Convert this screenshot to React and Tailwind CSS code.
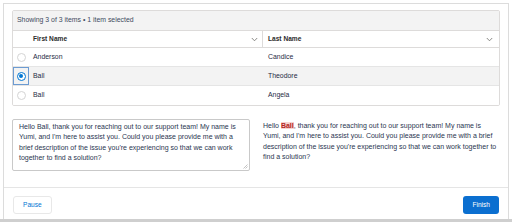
import React from 'react';

const rows = [
    { first: 'Anderson', last: 'Candice', selected: false },
    { first: 'Ball', last: 'Theodore', selected: true },
    { first: 'Ball', last: 'Angela', selected: false },
];

function Chevron() {
    return (
        <svg width="7" height="5" viewBox="0 0 7 5" className="text-[#706e6b]">
            <path d="M0.8 1 L3.5 3.8 L6.2 1" fill="none" stroke="currentColor" strokeWidth="0.8" />
        </svg>
    );
}

function Radio({ checked }) {
    return checked ? (
        <span className="w-[9px] h-[9px] rounded-full border border-[#0176d3] bg-white flex items-center justify-center">
            <span className="w-[4px] h-[4px] rounded-full bg-[#0176d3]" />
        </span>
    ) : (
        <span className="w-[9px] h-[9px] rounded-full border border-[#d4d4d4] bg-white" />
    );
}

export default function App() {
    return (
        <div className="w-[512px] h-[222px] bg-white font-['Liberation_Sans',Arial,sans-serif] text-[#1f2b45] flex flex-col">
            <div className="mx-[3px] mt-[3px] h-[216px] border border-[#dcdcdc] border-b-0 bg-white flex flex-col">
                {/* table */}
                <div className="mx-[8px] mt-[6px] border border-[#dddbda] rounded-[2px] overflow-hidden">
                    <div className="h-[19px] bg-[#f3f3f3] flex items-center px-[4px] text-[6.9px] text-[#3e4a60]">
                        Showing 3 of 3 items • 1 item selected
                    </div>
                    <div className="grid grid-cols-[16px_234px_1fr] h-[18px] bg-white border-t border-b border-[#dddbda] text-[6.6px] font-bold text-[#2b2b2b]">
                        <div />
                        <div className="flex items-center justify-between px-[4px] border-r border-[#dddbda]">
                            <span>First Name</span>
                            <Chevron />
                        </div>
                        <div className="flex items-center justify-between px-[5px] pr-[6px]">
                            <span>Last Name</span>
                            <Chevron />
                        </div>
                    </div>
                    {rows.map((r, i) => (
                        <div
                            key={i}
                            className={
                                'grid grid-cols-[16px_234px_1fr] h-[19px] text-[6.9px] ' +
                                (r.selected ? 'bg-[#f3f3f3] ' : 'bg-white ') +
                                (i < rows.length - 1 ? 'border-b border-[#e5e5e5]' : '')
                            }
                        >
                            <div className={'flex items-center justify-center ' + (r.selected ? 'border border-[#6c9bd2]' : '')}>
                                <Radio checked={r.selected} />
                            </div>
                            <div className="flex items-center px-[4px]">{r.first}</div>
                            <div className="flex items-center px-[5px]">{r.last}</div>
                        </div>
                    ))}
                </div>

                {/* message area */}
                <div className="flex mt-[13px] mx-[8px]">
                    <div className="relative w-[238px] shrink-0 h-[52px] border border-[#c9c9c9] rounded-[2px] pl-[6px] pr-[3px] pt-[2px] text-[7px] leading-[10.4px] text-[#2a3550]">
                        Hello Ball, thank you for reaching out to our support team! My name is Yumi, and I'm here to assist you. Could you please provide me with a brief description of the issue you're experiencing so that we can work together to find a solution?
                        <svg width="5" height="5" viewBox="0 0 5 5" className="absolute right-[1px] bottom-[1px] text-[#9a9a9a]">
                            <path d="M4.5 0.5 L0.5 4.5 M4.5 2.5 L2.5 4.5" stroke="currentColor" strokeWidth="0.6" />
                        </svg>
                    </div>
                    <div className="w-[234px] shrink-0 ml-[13px] pt-[2px] text-[7px] leading-[10.4px] text-[#2a3550]">
                        Hello <span className="bg-[#f6d3d0] text-[#b3261e] font-bold">Ball</span>, thank you for reaching out to our support team! My name is Yumi, and I'm here to assist you. Could you please provide me with a brief description of the issue you're experiencing so that we can work together to find a solution?
                    </div>
                </div>

                {/* footer */}
                <div className="mt-auto border-t border-[#e5e5e5] h-[32px] flex items-center justify-between px-[9px] pt-[2px]">
                    <button className="h-[18px] px-[9px] border border-[#e8e8e8] rounded-[3px] bg-white text-[6.6px] text-[#0176d3]">
                        Pause
                    </button>
                    <button className="h-[18px] px-[9px] rounded-[3px] bg-[#0b6fd0] text-[6.6px] text-white">
                        Finish
                    </button>
                </div>
            </div>
            <div className="flex-1 bg-[#cfcfcf]" />
        </div>
    );
}
